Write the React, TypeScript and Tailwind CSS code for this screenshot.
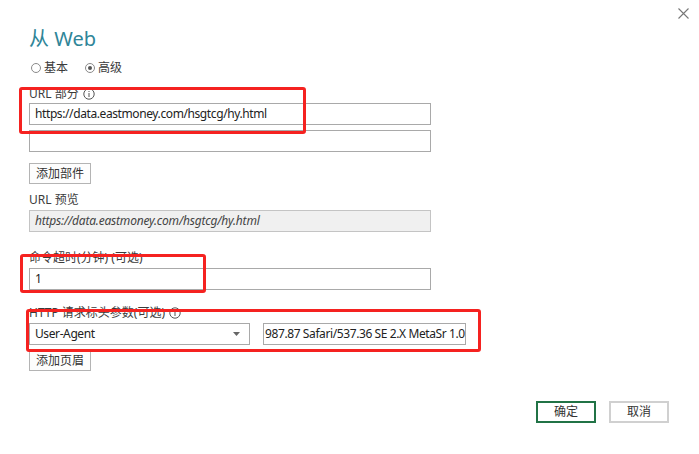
import React from 'react';

const font = 'font-["Segoe_UI","Noto_Sans","Noto_Sans_CJK_SC",sans-serif]';

const InfoIcon: React.FC = () => (
  <svg width="12" height="12" viewBox="0 0 12 12" className="ml-[4px] text-[#555]">
    <circle cx="6" cy="6" r="5.2" fill="none" stroke="currentColor" strokeWidth="1" />
    <rect x="5.5" y="5" width="1" height="4" fill="currentColor" />
    <rect x="5.5" y="3" width="1" height="1" fill="currentColor" />
  </svg>
);

const Radio: React.FC<{ checked?: boolean; label: string }> = ({ checked, label }) => (
  <label className="flex items-center gap-[3px]">
    <span className="w-[10px] h-[10px] rounded-full border border-[#8a8a8a] flex items-center justify-center bg-white">
      {checked && <span className="w-[4px] h-[4px] rounded-full bg-[#555]" />}
    </span>
    <span>{label}</span>
  </label>
);

const TextBox: React.FC<{ value?: string; className?: string }> = ({ value, className = '' }) => (
  <div className={`h-[22px] border border-[#a9a9a9] bg-white flex items-center px-[5px] text-[#222] tracking-[-0.4px] whitespace-nowrap overflow-hidden ${className}`}>
    {value}
  </div>
);

const SmallButton: React.FC<{ label: string }> = ({ label }) => (
  <button className="w-[62px] h-[21px] border border-[#b4b4b4] bg-[#fdfdfd] text-[#333] text-[12px] leading-none">
    {label}
  </button>
);

const App: React.FC = () => {
  return (
    <div className={`relative w-[699px] h-[454px] bg-white text-[12px] text-[#3b3b3b] overflow-hidden ${font}`}>
      {/* close */}
      <svg width="11" height="11" viewBox="0 0 11 11" className="absolute left-[678px] top-[8px]">
        <path d="M0.5 0.5 L10.5 10.5 M10.5 0.5 L0.5 10.5" stroke="#777" strokeWidth="1.1" />
      </svg>

      <div className="flex flex-col pl-[29px] pt-[25px]">
        <h1 className="h-[28px] leading-[28px] text-[20px] text-[#2f8598] font-normal">从 Web</h1>

        <div className="mt-[7px] h-[16px] flex items-center gap-[17px] pl-[2px]">
          <Radio label="基本" />
          <Radio checked label="高级" />
        </div>

        <div className="mt-[10px] h-[16px] flex items-center">
          URL 部分
          <InfoIcon />
        </div>
        <TextBox className="mt-[1px] w-[402px]" value="https://data.eastmoney.com/hsgtcg/hy.html" />
        <TextBox className="mt-[5px] w-[402px] h-[21px]" />

        <div className="mt-[11px]">
          <SmallButton label="添加部件" />
        </div>

        <div className="mt-[8px] h-[16px] flex items-center">URL 预览</div>
        <div className="mt-[2px] w-[402px] h-[22px] border border-[#c4c4c4] bg-[#f0f0f0] flex items-center px-[5px] italic tracking-[-0.2px] text-[#444]">
          https://data.eastmoney.com/hsgtcg/hy.html
        </div>

        <div className="mt-[18px] h-[16px] flex items-center">命令超时(分钟) (可选)</div>
        <TextBox className="mt-[2px] w-[402px] h-[21px]" value="1" />

        <div className="mt-[15px] h-[16px] flex items-center">
          HTTP 请求标头参数(可选)
          <InfoIcon />
        </div>
        <div className="mt-[2px] flex items-center gap-[13px]">
          <div className="w-[221px] h-[22px] border border-[#a9a9a9] bg-white flex items-center justify-between pl-[5px] pr-[9px] text-[#222] tracking-[-0.4px]">
            User-Agent
            <svg width="7" height="4" viewBox="0 0 7 4">
              <path d="M0 0 L7 0 L3.5 4 Z" fill="#666" />
            </svg>
          </div>
          <div className="w-[203px] h-[22px] border border-[#a9a9a9] bg-white flex items-center pl-[1px] text-[#222] tracking-[-0.4px] whitespace-nowrap">
            987.87 Safari/537.36 SE 2.X MetaSr 1.0
          </div>
        </div>

        <div className="mt-[5px]">
          <SmallButton label="添加页眉" />
        </div>
      </div>

      <div className="absolute left-0 right-0 top-[401px] flex justify-end gap-[13px] pr-[30px]">
        <button className="w-[60px] h-[22px] border-2 border-[#217346] bg-white text-[#333] text-[12px]">确定</button>
        <button className="w-[60px] h-[22px] border-2 border-[#d0d0d0] bg-white text-[#333] text-[12px]">取消</button>
      </div>

      {/* red annotation boxes */}
      <div className="absolute left-[19px] top-[87px] w-[287px] h-[47px] border-[3px] border-[#f52220] rounded-[3px]" />
      <div className="absolute left-[20px] top-[254px] w-[186px] h-[39px] border-[3px] border-[#f52220] rounded-[3px]" />
      <div className="absolute left-[26px] top-[309px] w-[455px] h-[43px] border-[3px] border-[#f52220] rounded-[3px]" />
    </div>
  );
};

export default App;
